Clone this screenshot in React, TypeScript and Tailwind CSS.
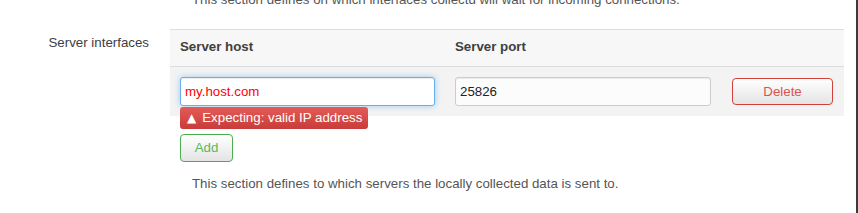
export default function App() {
  return (
    <div
      className="w-[858px] h-[213px] overflow-hidden bg-white border-r-2 border-[#3a3a3a] text-[13.3px] leading-5 text-[#404040]"
      style={{ fontFamily: '"Liberation Sans", Arial, sans-serif' }}
    >
      <div className="-mt-[10px] pl-[192px] text-[#555]">
        This section defines on which interfaces collectd will wait for incoming connections.
      </div>
      <div className="mt-[19px] flex">
        <div className="w-[170px] shrink-0 pr-[21px] pt-[4px] text-right text-[#404040]">
          Server interfaces
        </div>
        <div className="w-[674px]">
          <div className="border-t border-[#ddd]">
            <div className="grid grid-cols-[275px_277px_122px] bg-[#f7f7f7] border-b border-[#ddd] font-bold text-[#404040]">
              <div className="pl-[10px] pt-[7px] pb-[9px]">Server host</div>
              <div className="pl-[10px] pt-[7px] pb-[9px]">Server port</div>
              <div />
            </div>
            <div className="grid grid-cols-[275px_277px_122px] bg-[#f3f3f3] py-[10px] items-start">
              <div className="pl-[10px] relative">
                <div className="w-[255px] h-[29px] rounded-[3px] border border-[#66afe9] bg-white px-[4px] flex items-center text-[#f00] shadow-[inset_0_1px_1px_rgba(0,0,0,0.075),0_0_6px_rgba(102,175,233,0.6)]">
                  my.host.com
                </div>
                <div className="absolute left-[10px] top-[30px] h-[22px] rounded-[3px] bg-linear-to-b from-[#e35b58] to-[#c83c39] pl-[7px] pr-[6px] flex items-center whitespace-nowrap text-white">
                  <span className="text-[12px] mr-[6px]" style={{ fontFamily: '"DejaVu Sans", sans-serif' }}>▲</span>
                  Expecting: valid IP address
                </div>
              </div>
              <div className="pl-[10px]">
                <div className="w-[256px] h-[29px] rounded-[3px] border border-[#ccc] bg-[#fcfcfc] px-[4px] flex items-center text-[#222] shadow-[inset_0_1px_1px_rgba(0,0,0,0.075)]">
                  25826
                </div>
              </div>
              <div className="pl-[10px] mt-px">
                <button className="w-[101px] h-[27px] rounded-[4px] border border-[#d43f3a] bg-linear-to-b from-white to-[#e4e4e4] text-[#d9534f] flex items-center justify-center">
                  Delete
                </button>
              </div>
            </div>
          </div>
          <div className="pl-[10px] mt-[18px]">
            <button className="w-[53px] h-[28px] rounded-[4px] border border-[#4cae4c] bg-linear-to-b from-white to-[#e4e4e4] text-[#5cb85c] flex items-center justify-center">
              Add
            </button>
          </div>
          <div className="mt-[12px] pl-[22px] text-[#555]">
            This section defines to which servers the locally collected data is sent to.
          </div>
        </div>
      </div>
    </div>
  );
}
